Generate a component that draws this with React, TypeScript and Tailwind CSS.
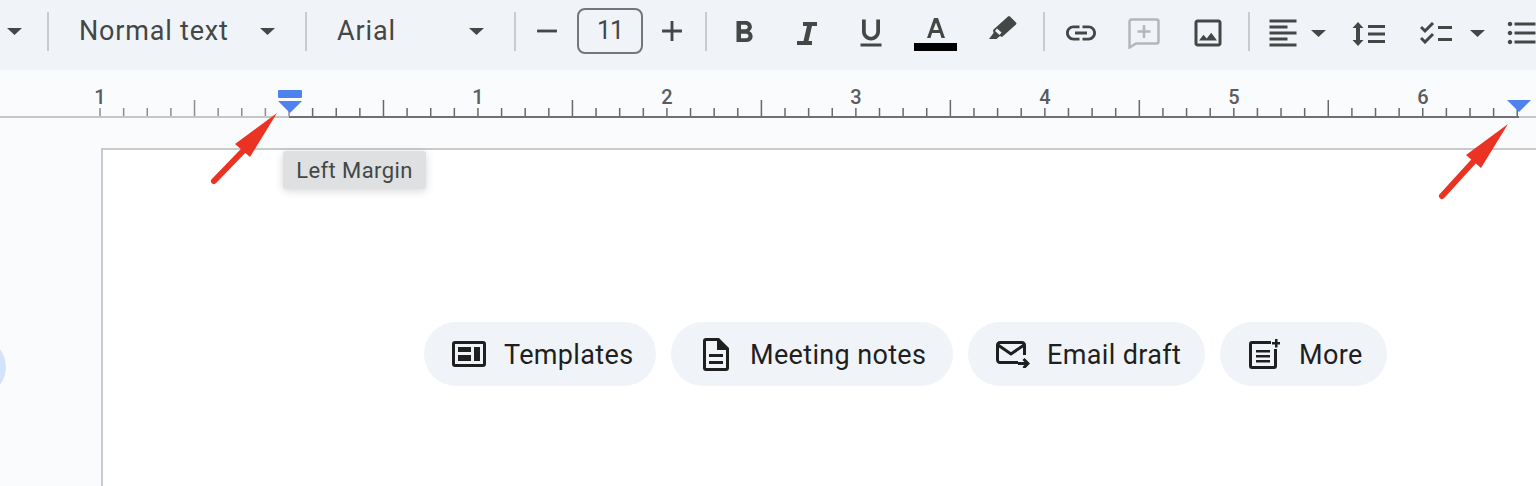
import React from "react";
import {
  MdAdd, MdRemove, MdFormatBold, MdFormatUnderlined, MdLink,
  MdOutlineImage, MdFormatAlignLeft, MdFormatListBulleted,
} from "react-icons/md";

const Caret = ({ className = "" }: { className?: string }) => (
  <svg viewBox="0 0 15 7" className={`h-[7px] w-[15px] shrink-0 fill-[#444746] ${className}`}>
    <polygon points="0,0 15,0 7.5,7" />
  </svg>
);
const Sep = ({ className = "" }: { className?: string }) => (
  <div className={`h-[39px] w-[2px] shrink-0 bg-[#c9cbce] ${className}`} />
);

const inches = ["1", "", "1", "2", "3", "4", "5", "6"];
const ticks = Array.from({ length: 61 }, (_, i) => i - 8);

function Ruler() {
  return (
    <div className="relative h-[48px] shrink-0 overflow-hidden">
      <div className="ml-[5.5px] flex pt-[14px]">
        {inches.map((n, i) => (
          <div key={i} className="w-[189px] shrink-0 text-center text-[20px] font-medium leading-[26px] text-[#5a5c5e]">
            {n}
          </div>
        ))}
      </div>
      <svg className="absolute left-0 top-0" width="1536" height="48">
        {ticks.map((k) => {
          const x = 289 + k * 23.62;
          const half = ((k % 4) + 4) % 4 === 0 && ((k % 8) + 8) % 8 !== 0;
          return <line key={k} x1={x} x2={x} y1={half ? 30 : 38} y2={47} stroke={k <= 0 ? "#8a8c8e" : "#68696b"} strokeWidth="1.5" />;
        })}
        <rect x="0" y="46" width="289" height="2" fill="#c4c6c8" />
        <rect x="289" y="46" width="1230" height="2" fill="#6f7173" />
        <rect x="1519" y="46" width="17" height="2" fill="#c4c6c8" />
        <rect x="278" y="20" width="24" height="8" rx="1" fill="#4f81ef" />
        <polygon points="278,31 302,31 290,43" fill="#4f81ef" />
        <polygon points="1507,30 1531,30 1519,42" fill="#4f81ef" />
      </svg>
    </div>
  );
}

function Chip({ icon, label, className }: { icon: React.ReactNode; label: string; className: string }) {
  return (
    <div className={`flex h-[64px] shrink-0 items-center rounded-full bg-[#f0f4f9] text-[27px] tracking-[0.35px] text-[#1f1f1f] ${className}`}>
      {icon}
      <span className="mt-[2px] whitespace-nowrap">{label}</span>
    </div>
  );
}

const TemplatesIcon = () => (
  <svg viewBox="0 0 34 26" className="h-[26px] w-[34px] shrink-0 fill-[#1f1f1f]">
    <path fillRule="evenodd" d="M3 0h28a3 3 0 0 1 3 3v20a3 3 0 0 1-3 3H3a3 3 0 0 1-3-3V3a3 3 0 0 1 3-3zm0 3v20h28V3H3z" />
    <rect x="6" y="6" width="13" height="5" />
    <rect x="6" y="14" width="13" height="6" />
    <rect x="22" y="6" width="6" height="14" />
  </svg>
);
const DocIcon = () => (
  <svg viewBox="0 0 26 33" className="h-[33px] w-[26px] shrink-0 fill-[#1f1f1f]">
    <path fillRule="evenodd" d="M3 0h13l10 10v20a3 3 0 0 1-3 3H3a3 3 0 0 1-3-3V3a3 3 0 0 1 3-3zm0 3v27h20V12h-9V3H3z" />
    <rect x="6" y="16" width="14" height="3" />
    <rect x="6" y="23" width="14" height="3" />
  </svg>
);
const MailIcon = () => (
  <svg viewBox="0 0 34 27" className="h-[27px] w-[34px] shrink-0 fill-none stroke-[#1f1f1f] stroke-[3]">
    <path d="M22 21.500H4a2.500 2.500 0 0 1-2.500-2.500V4A2.500 2.500 0 0 1 4 1.500h22A2.500 2.500 0 0 1 28.500 4v10" />
    <path d="M2 4l13 9 13-9" />
    <path d="M22 22.500h10M27.500 18l4.500 4.500-4.500 4.500" />
  </svg>
);
const MoreIcon = () => (
  <svg viewBox="0 0 31 30" className="h-[30px] w-[31px] shrink-0 fill-[#1f1f1f]">
    <path d="M3 2h19v3H3v22h22V10h3v17a3 3 0 0 1-3 3H3a3 3 0 0 1-3-3V5a3 3 0 0 1 3-3z" />
    <rect x="7" y="11" width="14" height="2.500" />
    <rect x="7" y="16" width="14" height="2.500" />
    <rect x="7" y="21" width="14" height="2.500" />
    <path d="M26 0h2.500v3H31v2.500h-2.500V8.500H26V5.500h-3V3h3z" />
  </svg>
);

const Arrow = ({ d, poly, box, className }: { d: string; poly: string; box: string; className: string }) => (
  <svg viewBox={box} className={`pointer-events-none absolute ${className}`}>
    <polygon points={poly} fill="#ea3323" />
    <path d={d} stroke="#ea3323" strokeWidth="6" strokeLinecap="round" fill="none" />
  </svg>
);

export default function App() {
  return (
    <div className="relative flex h-[486px] w-[1536px] flex-col overflow-hidden bg-[#f9fbfd] font-['Roboto',sans-serif]">
      <div className="flex h-[70px] shrink-0 items-center overflow-hidden bg-[#f0f4f9] pb-[8px] pl-[7px] text-[#444746]">
        <Caret />
        <Sep className="ml-[25px]" />
        <span className="ml-[30px] w-[150px] shrink-0 whitespace-nowrap text-[27px] tracking-[0.8px]">Normal text</span>
        <Caret className="ml-[31px]" />
        <Sep className="ml-[30px]" />
        <span className="ml-[30px] w-[58px] shrink-0 text-[27px] tracking-[0.9px]">Arial</span>
        <Caret className="ml-[74px]" />
        <Sep className="ml-[30px]" />
        <MdRemove size={34} className="ml-[14px] shrink-0" />
        <div className="ml-[13px] flex h-[46px] w-[66px] shrink-0 items-center justify-center rounded-[8px] border-2 border-[#747775] text-[25px] tracking-[-1px]">11</div>
        <MdAdd size={34} className="ml-[12px] shrink-0" />
        <Sep className="ml-[16px]" />
        <MdFormatBold size={36} className="ml-[19px] mt-[3px] shrink-0" />
        <svg viewBox="0 0 20 23" className="ml-[35px] mt-[5px] h-[23px] w-[20px] shrink-0 fill-[#444746]">
          <path d="M6 0h14v4h-5l-3.500 15H15v4H0v-4h6.500L10 4H6z" />
        </svg>
        <MdFormatUnderlined size={36} className="ml-[36px] mt-[4px] shrink-0" />
        <div className="ml-[25px] flex w-[43px] shrink-0 flex-col items-center pt-[6px]">
          <svg viewBox="0 0 18 20" className="h-[20px] w-[18px] fill-[#444746]">
            <path fillRule="evenodd" d="M7 0h4l7 20h-3.500l-1.600-5H5.100l-1.600 5H0zM9 4.500L6.200 12h5.600z" />
          </svg>
          <div className="mt-[5px] h-[8px] w-[43px] bg-black" />
        </div>
        <svg viewBox="0 0 28 24" className="mb-[7px] ml-[32px] h-[24px] w-[28px] shrink-0 fill-[#444746]">
          <path fillRule="evenodd" d="M19 .5a1.500 1.500 0 0 1 2 0l6 6a1.500 1.500 0 0 1 0 2L13 21l-2-1-3.500 3H0l4.500-6L4 14zM8 12.500L6 15l4.500 4 2-2.500z" />
        </svg>
        <Sep className="ml-[26px]" />
        <MdLink size={36} className="ml-[18px] mt-[3px] shrink-0" />
        <svg viewBox="0 0 32 31" className="ml-[29px] mt-[4px] h-[31px] w-[32px] shrink-0 fill-none stroke-[#b4b7ba] stroke-[2.500]">
          <path d="M3.500 1.500h25a2 2 0 0 1 2 2v20a2 2 0 0 1-2 2H8l-6.500 4V3.500a2 2 0 0 1 2-2z" />
          <path d="M16 7v13M9.500 13.500h13" />
        </svg>
        <MdOutlineImage size={36} className="ml-[30px] mt-[3px] shrink-0" />
        <Sep className="ml-[22px]" />
        <MdFormatAlignLeft size={36} className="ml-[15px] mt-[3px] shrink-0" />
        <Caret className="ml-[10px] mt-[4px]" />
        <svg viewBox="0 0 33 24" className="ml-[26px] mt-[6px] h-[24px] w-[33px] shrink-0 fill-[#444746]">
          <path d="M6 0l5.500 6H8v12h3.500L6 24 .5 18H4V6H.5z" />
          <rect x="16" y="3" width="17" height="3" />
          <rect x="16" y="10.500" width="17" height="3" />
          <rect x="16" y="18" width="17" height="3" />
        </svg>
        <svg viewBox="0 0 32 22" className="ml-[35px] mt-[4px] h-[22px] w-[32px] shrink-0">
          <path d="M1 5l4 4 8-8M1 16l4 4 8-8" fill="none" stroke="#444746" strokeWidth="3" />
          <rect x="18" y="4" width="14" height="3" fill="#444746" />
          <rect x="18" y="16" width="14" height="3" fill="#444746" />
        </svg>
        <Caret className="ml-[18px] mt-[4px]" />
        <MdFormatListBulleted size={36} className="ml-[19px] mt-[4px] shrink-0" />
      </div>
      <Ruler />
      <div className="ml-[101px] mt-[30px] flex flex-1 gap-[15px] border-l-2 border-t-2 border-[#c9cacb] bg-white pl-[321px] pt-[172px]">
        <Chip className="w-[232px] gap-[18px] pl-[28px]" icon={<TemplatesIcon />} label="Templates" />
        <Chip className="w-[282px] gap-[21px] pl-[32px]" icon={<DocIcon />} label="Meeting notes" />
        <Chip className="w-[237px] gap-[17px] pl-[28px]" icon={<MailIcon />} label="Email draft" />
        <Chip className="w-[167px] gap-[19px] pl-[29px]" icon={<MoreIcon />} label="More" />
      </div>

      <div className="absolute left-[-26px] top-[338px] h-[58px] w-[32px] rounded-r-full bg-[#d3e3fd]" />

      <div className="absolute left-[283px] top-[151px] flex h-[38px] w-[143px] items-center justify-center rounded-[3px] bg-[#dfe0e1] text-[22px] tracking-[0.4px] text-[#444746] shadow-[0_2px_8px_rgba(0,0,0,0.16)]">
        Left Margin
      </div>

      <Arrow className="left-[205px] top-[108px] h-[80px] w-[80px]" box="205 108 80 80"
        poly="277,113 235,144 250,157" d="M243 151L214 181" />
      <Arrow className="left-[1435px] top-[118px] h-[85px] w-[80px]" box="1435 118 80 85"
        poly="1508,124 1466,155 1481,168" d="M1473 162L1442 196" />
    </div>
  );
}
